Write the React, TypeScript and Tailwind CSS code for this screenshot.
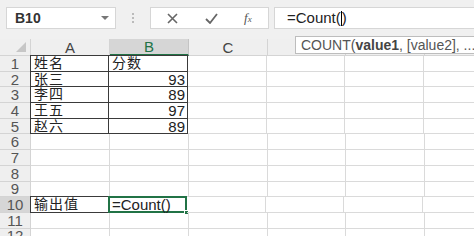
import React from 'react';

const font = { fontFamily: '"Liberation Sans", "Noto Sans CJK SC", sans-serif' };

const cols = ['A', 'B', 'C', 'D', 'E', 'F'];
const colW = ['w-[79px]', 'w-[79px]', 'w-[79px]', 'w-[78px]', 'w-[79px]', 'w-[80px]'];
// D, E, F headers sit under the function tooltip
const hidden = ['D', 'E', 'F'];

type Cell = { text?: string; right?: boolean; box?: boolean; active?: boolean; cjk?: boolean };

const data: Record<number, Cell[]> = {
  1: [{ text: '姓名', box: true, cjk: true }, { text: '分数', box: true, cjk: true }],
  2: [{ text: '张三', box: true, cjk: true }, { text: '93', right: true, box: true }],
  3: [{ text: '李四', box: true, cjk: true }, { text: '89', right: true, box: true }],
  4: [{ text: '王五', box: true, cjk: true }, { text: '97', right: true, box: true }],
  5: [{ text: '赵六', box: true, cjk: true }, { text: '89', right: true, box: true }],
  10: [{ text: '输出值', box: true, cjk: true }, { text: '=Count()', active: true }],
};

function Toolbar() {
  return (
    <div className="flex items-center h-[39px] bg-[#f0f0f0] pl-[6px] pb-[3px]">
      {/* name box */}
      <div className="flex items-center justify-between w-[110px] h-[22px] bg-white border border-[#d6d6d6] pl-[8px] pr-[6px]">
        <span className="text-[14px] text-[#333] font-bold">B10</span>
        <svg width="8" height="5" viewBox="0 0 8 5">
          <path d="M0 0h8L4 4z" fill="#777" />
        </svg>
      </div>
      <div className="flex flex-col gap-[2px] ml-[16px] mr-[16px]">
        <span className="w-[2px] h-[2px] bg-[#bbb]" />
        <span className="w-[2px] h-[2px] bg-[#bbb]" />
        <span className="w-[2px] h-[2px] bg-[#bbb]" />
      </div>
      {/* buttons */}
      <div className="flex items-center w-[119px] h-[22px] bg-white border border-[#d6d6d6]">
        <svg className="ml-[16px]" width="11" height="11" viewBox="0 0 11 11">
          <path d="M1 1l9 9M10 1l-9 9" stroke="#666" strokeWidth="1.6" />
        </svg>
        <svg className="ml-[27px]" width="13" height="11" viewBox="0 0 13 11">
          <path d="M1 6l4 4 7-9" stroke="#666" strokeWidth="1.8" fill="none" />
        </svg>
        <span className="ml-[26px] text-[13px] italic text-[#555]" style={{ fontFamily: '"Liberation Serif", serif' }}>
          f<span className="text-[9px]">x</span>
        </span>
      </div>
      {/* formula input */}
      <div className="flex items-center flex-1 h-[22px] ml-[5px] bg-white border border-[#d6d6d6] border-r-0 pl-[12px]">
        <span className="text-[15px] text-[#222]">=Count(</span>
        <span className="w-[1px] h-[15px] bg-black" />
        <span className="text-[15px] text-[#222]">)</span>
      </div>
    </div>
  );
}

function HeaderRow() {
  return (
    <div className="flex h-[17px]">
      <div className="relative w-[31px] shrink-0 bg-[#efefef] border-r border-b border-[#d4d4d4]">
        <svg className="absolute right-[4px] bottom-[3px]" width="10" height="10" viewBox="0 0 10 10">
          <path d="M10 0v10H0z" fill="#c6c6c6" />
        </svg>
      </div>
      {cols.map((c, i) => (
        <div
          key={c}
          className={`${colW[i]} shrink-0 flex items-center justify-center text-[15px] leading-none border-r ${
            c === 'B'
              ? 'bg-[#d6d6d6] text-[#217346] border-b-2 border-b-[#217346] border-r-[#c4c4c4]'
              : 'bg-[#efefef] text-[#444] border-b border-[#d4d4d4]'
          }`}
        >
          {hidden.includes(c) ? '' : c}
        </div>
      ))}
    </div>
  );
}

function Row({ n }: { n: number }) {
  const cells = data[n] || [];
  const sel = n === 10;
  return (
    <div className="flex h-[15.7px]">
      <div
        className={`w-[31px] shrink-0 flex items-center justify-center text-[15px] leading-[15px] border-r border-b border-[#d4d4d4] ${
          sel ? 'bg-[#d6d6d6] text-[#555]' : 'bg-[#efefef] text-[#555]'
        }`}
      >
        {n}
      </div>
      {cols.map((c, i) => {
        const cell = cells[i];
        let cls = 'border-r border-b border-[#dadada]';
        if (cell?.box) cls = 'border-r border-b border-[#3a3a3a]';
        if (cell?.box && i === 0) cls += ' border-l border-l-[#3a3a3a] -ml-px';
        if (cell?.box && (n === 1 || n === 10)) cls += ' border-t border-t-[#3a3a3a] -mt-px';
        if (cell?.active) cls = 'border-2 border-[#217346] -mt-px -ml-px';
        return (
          <div
            key={c}
            className={`relative ${colW[i]} shrink-0 flex items-center px-[2px] ${
              cell?.cjk ? 'text-[14px] leading-[13px] tracking-[1px] pl-[3px]' : 'text-[15px] leading-[15px]'
            } text-[#222] ${cell?.right ? 'justify-end' : ''} ${cls}`}
          >
            {cell?.text}
            {cell?.active && (
              <span className="absolute -right-[4px] -bottom-[4px] w-[5px] h-[5px] bg-[#217346] border border-white" />
            )}
          </div>
        );
      })}
    </div>
  );
}

export default function App() {
  return (
    <div className="relative w-[474px] h-[236px] overflow-hidden bg-white" style={font}>
      <Toolbar />
      <HeaderRow />
      {Array.from({ length: 12 }, (_, i) => (
        <Row key={i} n={i + 1} />
      ))}
      {/* function tooltip */}
      <div className="absolute left-[295px] top-[36px] h-[18px] w-[190px] flex items-center pl-[5px] bg-white border border-[#bdbdbd] text-[14px] text-[#555] whitespace-nowrap">
        COUNT(<b className="text-[#444]">value1</b>, [value2], ...)
      </div>
    </div>
  );
}
